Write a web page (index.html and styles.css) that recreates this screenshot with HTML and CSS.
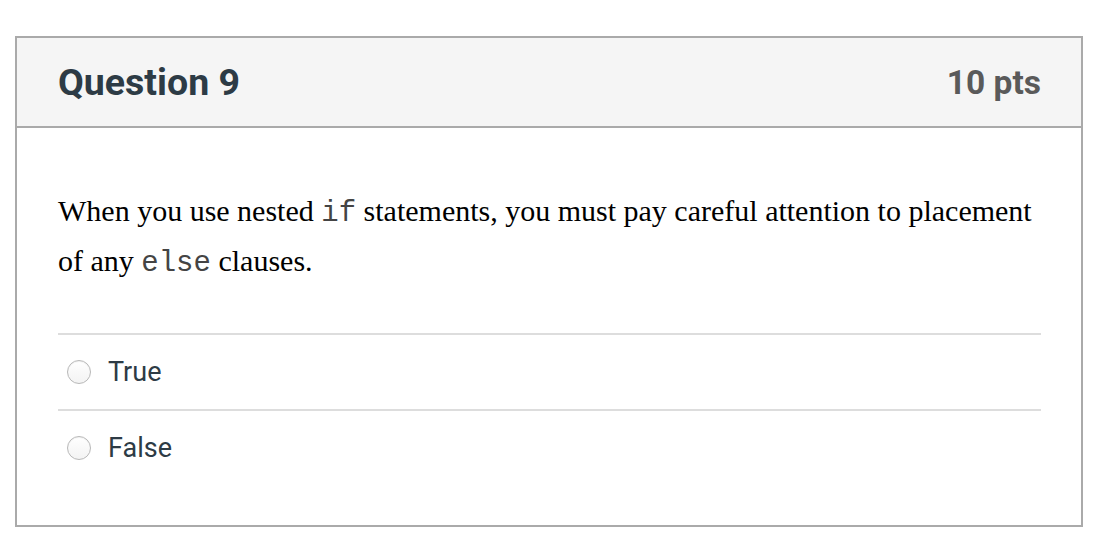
FILE: index.html
```html
<!DOCTYPE html>
<html>
<head>
<meta charset="utf-8">
<link rel="stylesheet" href="styles.css">
</head>
<body>
<div class="page">
  <div class="question">
    <div class="q-header">
      <h2 class="q-title">Question 9</h2>
      <span class="q-points">10 pts</span>
    </div>
    <div class="q-body">
      <p class="q-text">When you use nested <code>if</code> statements, you must pay careful attention to placement of any <code>else</code> clauses.</p>
      <div class="answers">
        <label class="answer"><span class="radio"></span><span class="answer-label">True</span></label>
        <label class="answer"><span class="radio"></span><span class="answer-label">False</span></label>
      </div>
    </div>
  </div>
</div>
</body>
</html>
```
FILE: styles.css
```css
html, body {
  margin: 0;
  padding: 0;
  background: #ffffff;
}
.page {
  padding: 36px 21px 0 15px;
  width: 1104px;
  box-sizing: border-box;
}
.question {
  border: 2px solid #aaaaaa;
  background: #ffffff;
  width: 1068px;
  box-sizing: border-box;
}
.q-header {
  display: flex;
  justify-content: space-between;
  align-items: center;
  background: #f5f5f5;
  border-bottom: 2px solid #aaaaaa;
  height: 88px;
  padding: 0 40px 0 41px;
  box-sizing: content-box;
}
.q-title {
  margin: 0;
  font-family: Roboto, "Liberation Sans", sans-serif;
  font-weight: 700;
  font-size: 37.5px;
  color: #2d3b45;
}
.q-points {
  font-family: Roboto, "Liberation Sans", sans-serif;
  font-weight: 700;
  font-size: 33.5px;
  color: #5a5a5a;
}
.q-body {
  padding: 58px 40px 40px 41px;
}
.q-text {
  margin: 0 0 47px 0;
  font-family: "Liberation Serif", serif;
  font-size: 30px;
  line-height: 50px;
  color: #000;
}
.q-text code {
  font-family: "Liberation Mono", "Courier New", monospace;
  font-size: 29px;
  line-height: 1;
  color: #444;
}
.answers {
  border-top: 2px solid #dddddd;
}
.answer {
  display: flex;
  align-items: center;
  height: 74px;
  border-bottom: 2px solid #dddddd;
  gap: 17px;
  padding-left: 9px;
}
.answer:last-child {
  border-bottom: none;
}
.radio {
  width: 24px;
  height: 24px;
  border-radius: 50%;
  border: 1px solid #b8b8b8;
  box-sizing: border-box;
  background: linear-gradient(#ffffff, #f3f3f3);
  box-shadow: inset 0 1px 1px rgba(0,0,0,0.06);
}
.answer-label {
  font-family: Roboto, "Liberation Sans", sans-serif;
  font-size: 27px;
  color: #2d3b45;
}
```
